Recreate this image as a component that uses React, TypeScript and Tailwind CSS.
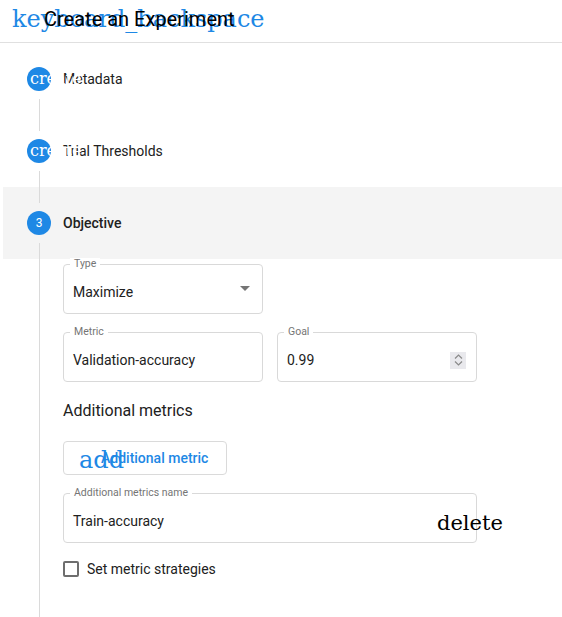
import React from "react";

function StepHeader({
  label,
  num,
  top,
  active,
}: {
  label: string;
  num?: string;
  top: boolean;
  active?: boolean;
}) {
  return (
    <div
      className={
        active
          ? "h-[72px] flex items-center px-[24px] bg-[#f4f4f4]"
          : "h-[72px] flex items-center px-[24px]"
      }
    >
      <div className="w-[24px] h-full flex flex-col shrink-0">
        <div className={top ? "h-[16px] w-px ml-[12px] bg-[#dadada]" : "h-[16px] w-px ml-[12px]"} />
        {num ? (
          <div className="mt-[8px] w-[24px] h-[24px] rounded-full bg-[#1e88e5] flex items-center justify-center text-white text-[12px] leading-[12px]">
            {num}
          </div>
        ) : (
          <div className="mt-[8px] w-[24px] h-[24px] rounded-full bg-[#1e88e5] flex items-center pl-[3px]">
            <span className="relative z-10 whitespace-nowrap font-['DejaVu_Serif',serif] text-[16px] leading-[16px] text-white">
              create
            </span>
          </div>
        )}
        <div className="mt-[8px] h-[16px] w-px ml-[12px] bg-[#dadada]" />
      </div>
      <span
        className={
          active
            ? "ml-[12px] text-[14px] font-medium text-[#212121]"
            : "ml-[12px] text-[14px] text-[#212121]"
        }
      >
        {label}
      </span>
    </div>
  );
}

function Field({
  label,
  className,
  children,
}: {
  label: string;
  className: string;
  children: React.ReactNode;
}) {
  return (
    <div
      className={
        "relative h-[50px] rounded-[4px] border border-[#d9d9d9] flex items-center pt-[6px] pl-[9px] " +
        className
      }
    >
      <span className="absolute left-[6px] -top-[7px] bg-white px-[4px] text-[10.5px] leading-[12px] text-[#757575] whitespace-nowrap">
        {label}
      </span>
      {children}
    </div>
  );
}

export default function App() {
  return (
    <div className="w-[562px] h-[617px] overflow-hidden bg-white font-[Roboto,sans-serif] text-[#212121]">
      <header className="h-[43px] border-b border-[#e0e0e0] flex items-start pt-[7px] pl-[12px]">
        <span className="w-[24px] shrink-0 whitespace-nowrap font-['DejaVu_Serif',serif] text-[24px] leading-[24px] text-[#1e88e5]">
          keyboard_backspace
        </span>
        <h1 className="ml-[8px] text-[20px] leading-[24px] text-black whitespace-nowrap">
          Create an Experiment
        </h1>
      </header>

      <div className="pl-[3px]">
        <StepHeader label="Metadata" top={false} />
        <StepHeader label="Trial Thresholds" top />
        <StepHeader label="Objective" num="3" top active />

        <div className="ml-[36px] border-l border-[#dadada] pl-[23px] pt-[5px] pb-[80px] flex flex-col items-start">
          <Field label="Type" className="w-[200px] pr-[12px]">
            <span className="flex-1 text-[14px]">Maximize</span>
            <span className="mb-[7px] w-0 h-0 border-x-[5px] border-t-[5px] border-x-transparent border-t-[#757575]" />
          </Field>

          <div className="mt-[18px] flex gap-[14px]">
            <Field label="Metric" className="w-[200px] pr-[10px]">
              <span className="flex-1 text-[14px]">Validation-accuracy</span>
            </Field>
            <Field label="Goal" className="w-[200px] pr-[10px]">
              <span className="flex-1 text-[14px]">0.99</span>
              <span className="w-[16px] h-[17px] bg-[#e9e9ed] flex flex-col items-center justify-center gap-[2px]">
                <svg width="9" height="5" viewBox="0 0 9 5">
                  <path d="M1 4.5 L4.5 1 L8 4.5" fill="none" stroke="#8a8a8a" strokeWidth="1.2" />
                </svg>
                <svg width="9" height="5" viewBox="0 0 9 5">
                  <path d="M1 0.5 L4.5 4 L8 0.5" fill="none" stroke="#8a8a8a" strokeWidth="1.2" />
                </svg>
              </span>
            </Field>
          </div>

          <h2 className="mt-[17px] text-[16px] leading-[24px] text-[#212121]">Additional metrics</h2>

          <button className="mt-[18px] h-[34px] w-[164px] rounded-[4px] border border-[#dadada] flex items-center pl-[15px] bg-white">
            <span className="mt-[3px] w-[20px] h-[24px] whitespace-nowrap font-['DejaVu_Serif',serif] text-[24px] leading-[24px] text-[#1e88e5] text-left">
              add
            </span>
            <span className="ml-[2px] text-[14px] leading-[20px] font-medium text-[#1e88e5] whitespace-nowrap">
              Additional metric
            </span>
          </button>

          <Field label="Additional metrics name" className="mt-[18px] w-[414px] pr-[11px]">
            <span className="flex-1 text-[14px]">Train-accuracy</span>
            <span className="mt-[4px] mr-[4px] w-[24px] whitespace-nowrap font-['DejaVu_Serif',serif] text-[21px] leading-[21px] text-black">
              delete
            </span>
          </Field>

          <label className="mt-[18px] h-[16px] flex items-center">
            <span className="w-[16px] h-[16px] rounded-[2px] border-2 border-[#6e6e6e]" />
            <span className="ml-[8px] text-[14px] leading-[16px] text-[#212121]">Set metric strategies</span>
          </label>
        </div>
      </div>
    </div>
  );
}
